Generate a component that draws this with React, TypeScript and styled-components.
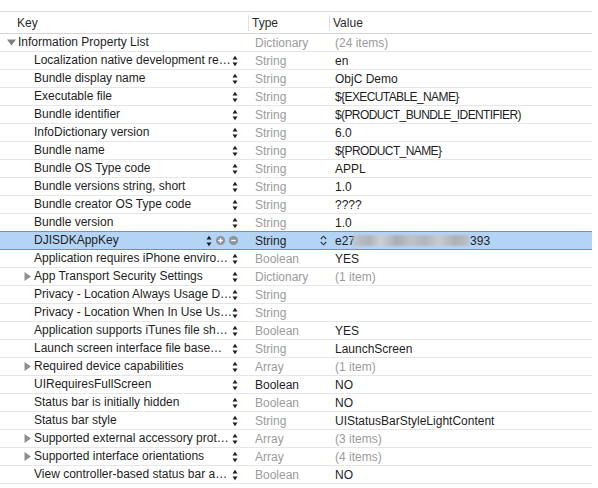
import React from "react";
import styled, { createGlobalStyle } from "styled-components";

const GlobalStyle = createGlobalStyle`
	html, body {
		margin: 0;
		padding: 0;
		background: #ffffff;
	}
	body {
		font-family: "Liberation Sans", Arial, sans-serif;
		font-size: 12px;
		color: #1e1e1e;
		-webkit-font-smoothing: antialiased;
	}
`;

type PlistRow = {
	key: string;
	type: string;
	value?: string;
	level: number;
	disclosure?: "open" | "closed";
	typeDark?: boolean;
	valueMuted?: boolean;
	condensed?: boolean;
	selected?: boolean;
};

const rows: PlistRow[] = [
	{ key: "Information Property List", type: "Dictionary", value: "(24 items)", level: 0, disclosure: "open", valueMuted: true },
	{ key: "Localization native development re…", type: "String", value: "en", level: 1 },
	{ key: "Bundle display name", type: "String", value: "ObjC Demo", level: 1 },
	{ key: "Executable file", type: "String", value: "${EXECUTABLE_NAME}", level: 1, condensed: true },
	{ key: "Bundle identifier", type: "String", value: "$(PRODUCT_BUNDLE_IDENTIFIER)", level: 1, condensed: true },
	{ key: "InfoDictionary version", type: "String", value: "6.0", level: 1 },
	{ key: "Bundle name", type: "String", value: "${PRODUCT_NAME}", level: 1, condensed: true },
	{ key: "Bundle OS Type code", type: "String", value: "APPL", level: 1 },
	{ key: "Bundle versions string, short", type: "String", value: "1.0", level: 1 },
	{ key: "Bundle creator OS Type code", type: "String", value: "????", level: 1 },
	{ key: "Bundle version", type: "String", value: "1.0", level: 1 },
	{ key: "DJISDKAppKey", type: "String", level: 1, selected: true, typeDark: true },
	{ key: "Application requires iPhone enviro…", type: "Boolean", value: "YES", level: 1 },
	{ key: "App Transport Security Settings", type: "Dictionary", value: "(1 item)", level: 1, disclosure: "closed", valueMuted: true },
	{ key: "Privacy - Location Always Usage D…", type: "String", value: "", level: 1 },
	{ key: "Privacy - Location When In Use Us…", type: "String", value: "", level: 1 },
	{ key: "Application supports iTunes file sh…", type: "Boolean", value: "YES", level: 1 },
	{ key: "Launch screen interface file base…", type: "String", value: "LaunchScreen", level: 1 },
	{ key: "Required device capabilities", type: "Array", value: "(1 item)", level: 1, disclosure: "closed", valueMuted: true },
	{ key: "UIRequiresFullScreen", type: "Boolean", value: "NO", level: 1, typeDark: true },
	{ key: "Status bar is initially hidden", type: "Boolean", value: "NO", level: 1 },
	{ key: "Status bar style", type: "String", value: "UIStatusBarStyleLightContent", level: 1 },
	{ key: "Supported external accessory prot…", type: "Array", value: "(3 items)", level: 1, disclosure: "closed", valueMuted: true },
	{ key: "Supported interface orientations", type: "Array", value: "(4 items)", level: 1, disclosure: "closed", valueMuted: true },
	{ key: "View controller-based status bar a…", type: "Boolean", value: "NO", level: 1 },
];

const Editor = styled.div`
	width: 592px;
	padding-top: 11px;
`;

const Grid = styled.div`
	display: grid;
	grid-template-columns: 249px 81px 1fr;
`;

const Header = styled(Grid)`
	height: 21px;
	border-top: 1px solid #dcdcdc;
	border-bottom: 1px solid #d4d4d4;
	color: #2a2a2a;
`;

const HeaderCell = styled.div<{ $divider?: boolean; $pad: number }>`
	display: flex;
	align-items: center;
	margin: 3px 0 2px;
	padding-left: ${({ $pad }) => $pad}px;
	border-left: ${({ $divider }) => ($divider ? "1px solid #e0e0e0" : "none")};
	margin-left: ${({ $divider }) => ($divider ? "-1px" : "0")};
`;

const Row = styled(Grid)<{ $selected?: boolean }>`
	height: 17px;
	border-bottom: 1px solid ${({ $selected }) => ($selected ? "#5e97d6" : "#e6e6e6")};
	background: ${({ $selected }) => ($selected ? "#b4d4f5" : "transparent")};
	box-shadow: ${({ $selected }) => ($selected ? "0 -1px 0 #5e97d6" : "none")};
`;

const KeyCell = styled.div<{ $level: number }>`
	display: flex;
	align-items: center;
	min-width: 0;
	padding-left: ${({ $level }) => ($level === 0 ? 7 : 24)}px;
	padding-right: 11px;
`;

const DisclosureSlot = styled.span<{ $level: number }>`
	flex: none;
	width: ${({ $level }) => ($level === 0 ? 11 : 10)}px;
	display: flex;
	align-items: center;
`;

const KeyText = styled.span`
	flex: 1;
	min-width: 0;
	white-space: nowrap;
	overflow: hidden;
	line-height: 17px;
`;

const Controls = styled.span`
	flex: none;
	display: flex;
	align-items: center;
`;

const CircleButton = styled.span`
	flex: none;
	width: 9px;
	height: 9px;
	border-radius: 50%;
	background: #8c939b;
	display: flex;
	align-items: center;
	justify-content: center;
	margin-left: 4px;
`;

const TypeCell = styled.div<{ $dark?: boolean }>`
	display: flex;
	align-items: center;
	justify-content: space-between;
	padding-left: 6px;
	padding-right: 3px;
	color: ${({ $dark }) => ($dark ? "#1e1e1e" : "#9b9b9b")};
	white-space: nowrap;
`;

const ValueCell = styled.div<{ $muted?: boolean; $condensed?: boolean }>`
	display: flex;
	align-items: center;
	padding-left: 5px;
	color: ${({ $muted }) => ($muted ? "#9b9b9b" : "#1e1e1e")};
	letter-spacing: ${({ $condensed }) => ($condensed ? "-0.6px" : "0")};
	white-space: nowrap;
	overflow: hidden;
`;

const Smudge = styled.span`
	display: inline-block;
	width: 116px;
	height: 11px;
	margin: 0 1px 0 -2px;
	background: linear-gradient(
		90deg,
		#c2c5cb 0%,
		#aeb2b9 14%,
		#cdd0d5 24%,
		#a9adb5 38%,
		#c0c3c8 50%,
		#b0b4bb 62%,
		#c9ccd1 74%,
		#acb0b7 88%,
		#bcbfc5 100%
	);
	filter: blur(1.2px);
`;

const Stepper = () => (
	<svg width="6" height="12" viewBox="0 0 6 12">
		<path d="M3 0.8 L5.5 4.6 L0.5 4.6 Z" fill="#1e1e1e" />
		<path d="M3 11.2 L5.5 7.4 L0.5 7.4 Z" fill="#1e1e1e" />
	</svg>
);

const ChevronStepper = () => (
	<svg width="7" height="11" viewBox="0 0 7 11">
		<path d="M0.8 4 L3.5 1.2 L6.2 4" fill="none" stroke="#333" strokeWidth="1.1" />
		<path d="M0.8 7 L3.5 9.8 L6.2 7" fill="none" stroke="#333" strokeWidth="1.1" />
	</svg>
);

const Disclosure = ({ open }: { open: boolean }) =>
	open ? (
		<svg width="9" height="7" viewBox="0 0 9 7">
			<path d="M0 0.5 L9 0.5 L4.5 6.5 Z" fill="#808080" />
		</svg>
	) : (
		<svg width="7" height="9" viewBox="0 0 7 9">
			<path d="M0.5 0 L7 4.5 L0.5 9 Z" fill="#8f8f8f" />
		</svg>
	);

const PlusMinus = ({ plus }: { plus?: boolean }) => (
	<CircleButton>
		<svg width="7" height="7" viewBox="0 0 7 7">
			<path d="M1.2 3.5 H5.8" stroke="#fff" strokeWidth="1.4" />
			{plus && <path d="M3.5 1.2 V5.8" stroke="#fff" strokeWidth="1.4" />}
		</svg>
	</CircleButton>
);

const App = () => (
	<>
		<GlobalStyle />
		<Editor>
			<Header>
				<HeaderCell $pad={17}>Key</HeaderCell>
				<HeaderCell $pad={3} $divider>
					Type
				</HeaderCell>
				<HeaderCell $pad={3} $divider>
					Value
				</HeaderCell>
			</Header>
			{rows.map((row, i) => (
				<Row key={i} $selected={row.selected}>
					<KeyCell $level={row.level}>
						<DisclosureSlot $level={row.level}>
							{row.disclosure && <Disclosure open={row.disclosure === "open"} />}
						</DisclosureSlot>
						<KeyText>{row.key}</KeyText>
						{row.level > 0 && (
							<Controls>
								<Stepper />
								{row.selected && (
									<>
										<PlusMinus plus />
										<PlusMinus />
									</>
								)}
							</Controls>
						)}
					</KeyCell>
					<TypeCell $dark={row.typeDark}>
						{row.type}
						{row.selected && <ChevronStepper />}
					</TypeCell>
					<ValueCell $muted={row.valueMuted} $condensed={row.condensed}>
						{row.selected ? (
							<>
								e27
								<Smudge />
								393
							</>
						) : (
							row.value
						)}
					</ValueCell>
				</Row>
			))}
		</Editor>
	</>
);

export default App;
